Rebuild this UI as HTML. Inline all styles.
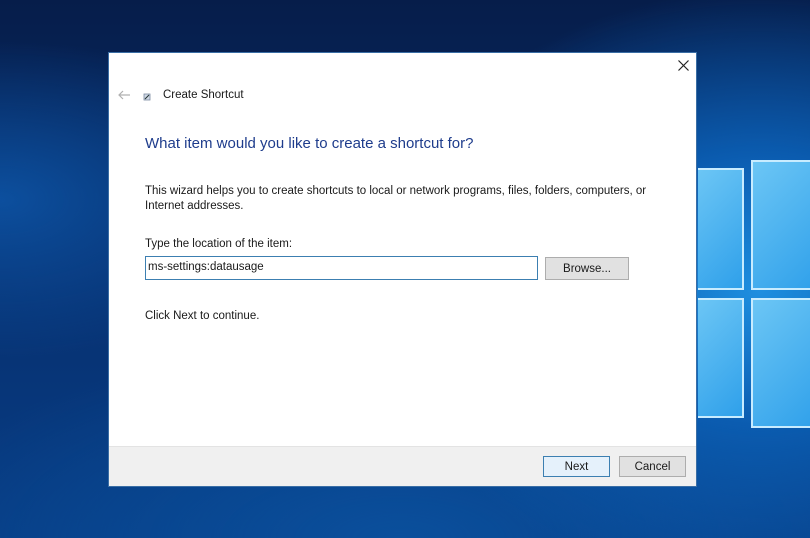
<!DOCTYPE html>
<html><head><meta charset="utf-8"><style>
*{margin:0;padding:0;box-sizing:border-box}
body{width:810px;height:538px;overflow:hidden;position:relative;font-family:"Liberation Sans",sans-serif;
background:radial-gradient(ellipse 380px 300px at 760px 290px,#1e8fe0 0%,#0b5cb0 45%,rgba(6,40,100,0) 100%),
radial-gradient(ellipse 300px 160px at 0px 200px,#0c4f9e 0%,rgba(6,40,100,0) 100%),
radial-gradient(ellipse 500px 200px at 400px 540px,#0a4f9c 0%,rgba(6,40,100,0) 100%),
linear-gradient(180deg,#061d4a 0%,#072f6e 50%,#073e86 100%);}
.pane{position:absolute;background:linear-gradient(135deg,#6cc6f5,#2fa0ea);border:2px solid #c8ecff;}
.dlg{position:absolute;left:108px;top:52px;width:589px;height:435px;background:#fff;border:1px solid #3a6ea5;font-size:11.5px;color:#1a1a1a}
.foot{position:absolute;left:0;right:0;bottom:0;height:40px;background:#f0f0f0;border-top:1px solid #e3e3e3}
.btn{position:absolute;height:21px;width:67px;background:#e1e1e1;border:1px solid #adadad;text-align:center;line-height:21px;font-size:11.5px}
.t{position:absolute;white-space:nowrap}
</style></head><body>
<div class="pane" style="left:698px;top:168px;width:46px;height:122px;border-left:none"></div>
<div class="pane" style="left:751px;top:160px;width:70px;height:130px"></div>
<div class="pane" style="left:698px;top:298px;width:46px;height:120px;border-left:none"></div>
<div class="pane" style="left:751px;top:298px;width:70px;height:130px"></div>
<div class="dlg">
 <svg style="position:absolute;left:569px;top:7px" width="11" height="11"><path d="M0.5 0.5l10 10M10.5 0.5l-10 10" stroke="#222" stroke-width="1.2"/></svg>
 <svg style="position:absolute;left:8px;top:36px" width="14" height="12"><path d="M13 6H2M6 2L2 6l4 4" stroke="#b0b0b0" stroke-width="1.2" fill="none"/></svg>
 <svg style="position:absolute;left:34px;top:40px" width="8" height="8"><rect x="1" y="1" width="6" height="6" fill="#cfd8e4" stroke="#7a8aa0" stroke-width=".8"/><path d="M2 6l4-4" stroke="#233" stroke-width="1"/></svg>
 <div class="t" style="left:54px;top:36px;font-size:11.5px">Create Shortcut</div>
 <div class="t" style="left:36px;top:82px;font-size:15px;color:#1e3c8c">What item would you like to create a shortcut for?</div>
 <div class="t" style="left:36px;top:131px;line-height:15px">This wizard helps you to create shortcuts to local or network programs, files, folders, computers, or<br>Internet addresses.</div>
 <div class="t" style="left:36px;top:185px">Type the location of the item:</div>
 <div style="position:absolute;left:36px;top:203px;width:393px;height:24px;border:1px solid #3c7fb1"></div>
 <div class="t" style="left:39px;top:208px">ms-settings:datausage</div>
 <div class="btn" style="left:436px;top:204px;width:84px;height:23px;line-height:23px">Browse...</div>
 <div class="t" style="left:36px;top:257px">Click Next to continue.</div>
 <div class="foot">
  <div class="btn" style="left:434px;top:9px;background:#e5f1fb;border-color:#3c7fb1">Next</div>
  <div class="btn" style="left:510px;top:9px">Cancel</div>
 </div>
</div>
</body></html>
